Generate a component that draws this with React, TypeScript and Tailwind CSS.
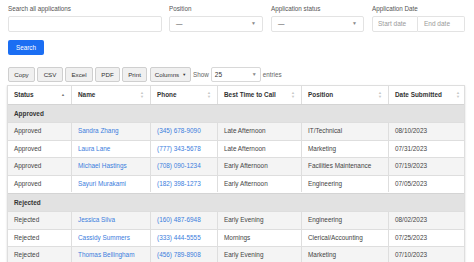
import React from 'react';

type Row = { status: string; name: string; phone: string; time: string; position: string; date: string };

const approved: Row[] = [
    { status: 'Approved', name: 'Sandra Zhang', phone: '(345) 678-9090', time: 'Late Afternoon', position: 'IT/Technical', date: '08/10/2023' },
    { status: 'Approved', name: 'Laura Lane', phone: '(777) 343-5678', time: 'Late Afternoon', position: 'Marketing', date: '07/31/2023' },
    { status: 'Approved', name: 'Michael Hastings', phone: '(708) 090-1234', time: 'Early Afternoon', position: 'Facilities Maintenance', date: '07/19/2023' },
    { status: 'Approved', name: 'Sayuri Murakami', phone: '(182) 398-1273', time: 'Early Afternoon', position: 'Engineering', date: '07/05/2023' },
];

const rejected: Row[] = [
    { status: 'Rejected', name: 'Jessica Silva', phone: '(160) 487-6948', time: 'Early Evening', position: 'Engineering', date: '08/02/2023' },
    { status: 'Rejected', name: 'Cassidy Summers', phone: '(333) 444-5555', time: 'Mornings', position: 'Clerical/Accounting', date: '07/25/2023' },
    { status: 'Rejected', name: 'Thomas Bellingham', phone: '(456) 789-8908', time: 'Early Evening', position: 'Marketing', date: '07/10/2023' },
];

const cols = ['w-[63px]', 'w-[79px]', 'w-[67px]', 'w-[84px]', 'w-[87px]', 'w-[78px]'];

const SortIcon = ({ active }: { active?: boolean }) => (
    <span className="flex flex-col items-center leading-none text-[4px] text-[#c8c8c8]">
        <span className={active ? 'text-[#777]' : ''}>▲</span>
        <span className={active ? 'hidden' : ''}>▼</span>
    </span>
);

const Caret = () => <span className="text-[5px] text-[#888]">▼</span>;

const Label = ({ children }: { children: React.ReactNode }) => (
    <div className="text-[6.3px] text-[#555] h-[8px] leading-[8px] mb-[3px] mt-[5px]">{children}</div>
);

const Select = () => (
    <div className="h-[16px] border border-[#e3e3e3] rounded-[2px] flex items-center justify-between px-[6px] text-[6.5px] text-[#555]">
        <span>—</span>
        <Caret />
    </div>
);

const ToolButton = ({ children, w }: { children: React.ReactNode; w: string }) => (
    <div className={`${w} h-[15px] bg-[#f0f0f0] border border-[#cfcfcf] rounded-[2px] flex items-center justify-center gap-[3px] text-[6.2px] text-[#333]`}>
        {children}
    </div>
);

const DataRow = ({ r, i }: { r: Row; i: number }) => (
    <div className={`flex h-[17.5px] border-t border-[#dedede] ${i % 2 === 0 ? 'bg-[#f4f4f4]' : 'bg-white'}`}>
        {[r.status, r.name, r.phone, r.time, r.position, r.date].map((v, j) => (
            <div
                key={j}
                className={`${cols[j]} shrink-0 flex items-center px-[6px] ${j > 0 ? 'border-l border-[#dedede]' : ''} ${j === 1 || j === 2 ? 'text-[#3b7ddd]' : 'text-[#444]'}`}
            >
                {v}
            </div>
        ))}
    </div>
);

const GroupRow = ({ label }: { label: string }) => (
    <div className="h-[18px] bg-[#e2e2e2] border-t border-[#d4d4d4] flex items-center px-[6px] font-bold text-[#333]">{label}</div>
);

export default function App() {
    const headers = ['Status', 'Name', 'Phone', 'Best Time to Call', 'Position', 'Date Submitted'];
    return (
        <div className="w-[474px] h-[262px] overflow-hidden bg-white pl-[8px] pr-[9px]" style={{ fontFamily: '"Liberation Sans", Arial, sans-serif' }}>
            <div className="flex gap-[7px]">
                <div className="w-[154px]">
                    <Label>Search all applications</Label>
                    <div className="h-[16px] border border-[#e3e3e3] rounded-[2px]" />
                </div>
                <div className="w-[94px]">
                    <Label>Position</Label>
                    <Select />
                </div>
                <div className="w-[93px] ml-[1px]">
                    <Label>Application status</Label>
                    <Select />
                </div>
                <div className="w-[93px] ml-[1px]">
                    <Label>Application Date</Label>
                    <div className="flex h-[16px] text-[6.5px] text-[#999]">
                        <div className="w-[46px] border border-[#e3e3e3] rounded-l-[2px] flex items-center px-[5px]">Start date</div>
                        <div className="w-[47px] border border-l-0 border-[#e3e3e3] rounded-r-[2px] flex items-center px-[6px]">End date</div>
                    </div>
                </div>
            </div>

            <div className="mt-[8px] w-[36px] h-[15px] bg-[#1b6ef3] rounded-[2px] text-white text-[6.3px] flex items-center justify-center">Search</div>

            <div className="mt-[12px] flex items-center text-[6.3px]">
                <div className="flex gap-[2px]">
                    <ToolButton w="w-[27px]">Copy</ToolButton>
                    <ToolButton w="w-[26px]">CSV</ToolButton>
                    <ToolButton w="w-[28px]">Excel</ToolButton>
                    <ToolButton w="w-[25px]">PDF</ToolButton>
                    <ToolButton w="w-[25px]">Print</ToolButton>
                </div>
                <div className="ml-[3px]">
                    <ToolButton w="w-[41px]">
                        Columns <span className="text-[4px]">▼</span>
                    </ToolButton>
                </div>
                <span className="ml-[2px] text-[#666]">Show</span>
                <div className="ml-[2px] w-[50px] h-[15px] border border-[#d8d8d8] rounded-[2px] flex items-center justify-between px-[3px] text-[6.5px] text-[#333]">
                    <span>25</span>
                    <Caret />
                </div>
                <span className="ml-[2px] text-[#666]">entries</span>
            </div>

            <div className="mt-[3px] -ml-[1px] w-[458px] border border-[#dedede] text-[6.4px] shadow-[0_1px_2px_rgba(0,0,0,0.15)]">
                <div className="flex h-[18px] bg-white font-bold text-[#333]">
                    {headers.map((h, j) => (
                        <div key={h} className={`${cols[j]} shrink-0 flex items-center justify-between px-[6px] ${j > 0 ? 'border-l border-[#dedede]' : ''}`}>
                            <span>{h}</span>
                            <SortIcon active={j === 0} />
                        </div>
                    ))}
                </div>
                <GroupRow label="Approved" />
                {approved.map((r, i) => (
                    <DataRow key={r.name} r={r} i={i} />
                ))}
                <div className="h-[1px] bg-white" />
                <GroupRow label="Rejected" />
                {rejected.map((r, i) => (
                    <DataRow key={r.name} r={r} i={i} />
                ))}
            </div>
        </div>
    );
}
